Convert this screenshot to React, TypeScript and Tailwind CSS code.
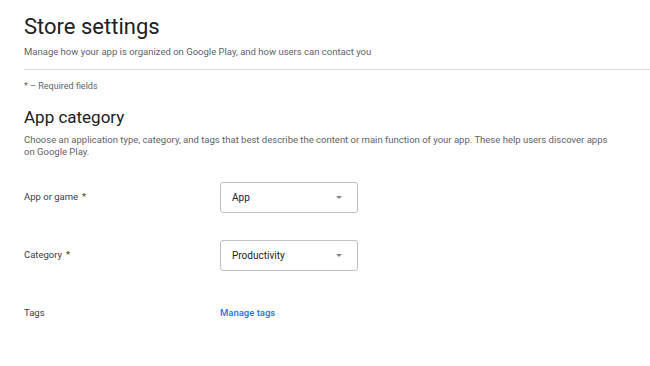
import React from 'react';

function SelectBox({ value }: { value: string }) {
  return (
    <div className="w-[138px] h-[31px] border border-[#bdc1c6] rounded-[3px] flex items-center justify-between pl-[11px] pr-[15px] text-[10px] text-[#202124]">
      <span>{value}</span>
      <svg width="6" height="3" viewBox="0 0 6 3">
        <path d="M0 0 L6 0 L3 3 Z" fill="#80868b" />
      </svg>
    </div>
  );
}

function FormRow({ label, required, children }: { label: string; required?: boolean; children: React.ReactNode }) {
  return (
    <div className="flex items-center h-[31px]">
      <div className="w-[196px] text-[9.5px] text-[#3c4043]">
        {label}
        {required && <span className="ml-[4px]">*</span>}
      </div>
      {children}
    </div>
  );
}

export default function App() {
  return (
    <div className="w-[650px] h-[366px] bg-white overflow-hidden pl-[24px] pt-[13px] font-['Roboto',sans-serif]">
      {/* header */}
      <h1 className="text-[22px] leading-[28px] text-[#202124] font-normal">
        Store settings
      </h1>
      <p className="mt-[4px] text-[9.5px] leading-[14px] text-[#5f6368]">
        Manage how your app is organized on Google Play, and how users can contact you
      </p>
      <div className="mt-[10px] h-px bg-[#dadce0]" />

      <p className="mt-[9px] text-[9px] leading-[14px] text-[#5f6368]">* – Required fields</p>

      {/* app category */}
      <h2 className="mt-[13px] text-[17px] leading-[22px] text-[#202124] font-normal">
        App category
      </h2>
      <p className="mt-[6px] w-[592px] text-[9.5px] leading-[12px] text-[#5f6368]">
        Choose an application type, category, and tags that best describe the content or main function of your app. These help users discover apps on Google Play.
      </p>

      <div className="mt-[24px] flex flex-col gap-[27px]">
        <FormRow label="App or game" required>
          <SelectBox value="App" />
        </FormRow>
        <FormRow label="Category" required>
          <SelectBox value="Productivity" />
        </FormRow>
        <FormRow label="Tags">
          <a className="text-[9.5px] font-medium text-[#1a73e8]">Manage tags</a>
        </FormRow>
      </div>
    </div>
  );
}
